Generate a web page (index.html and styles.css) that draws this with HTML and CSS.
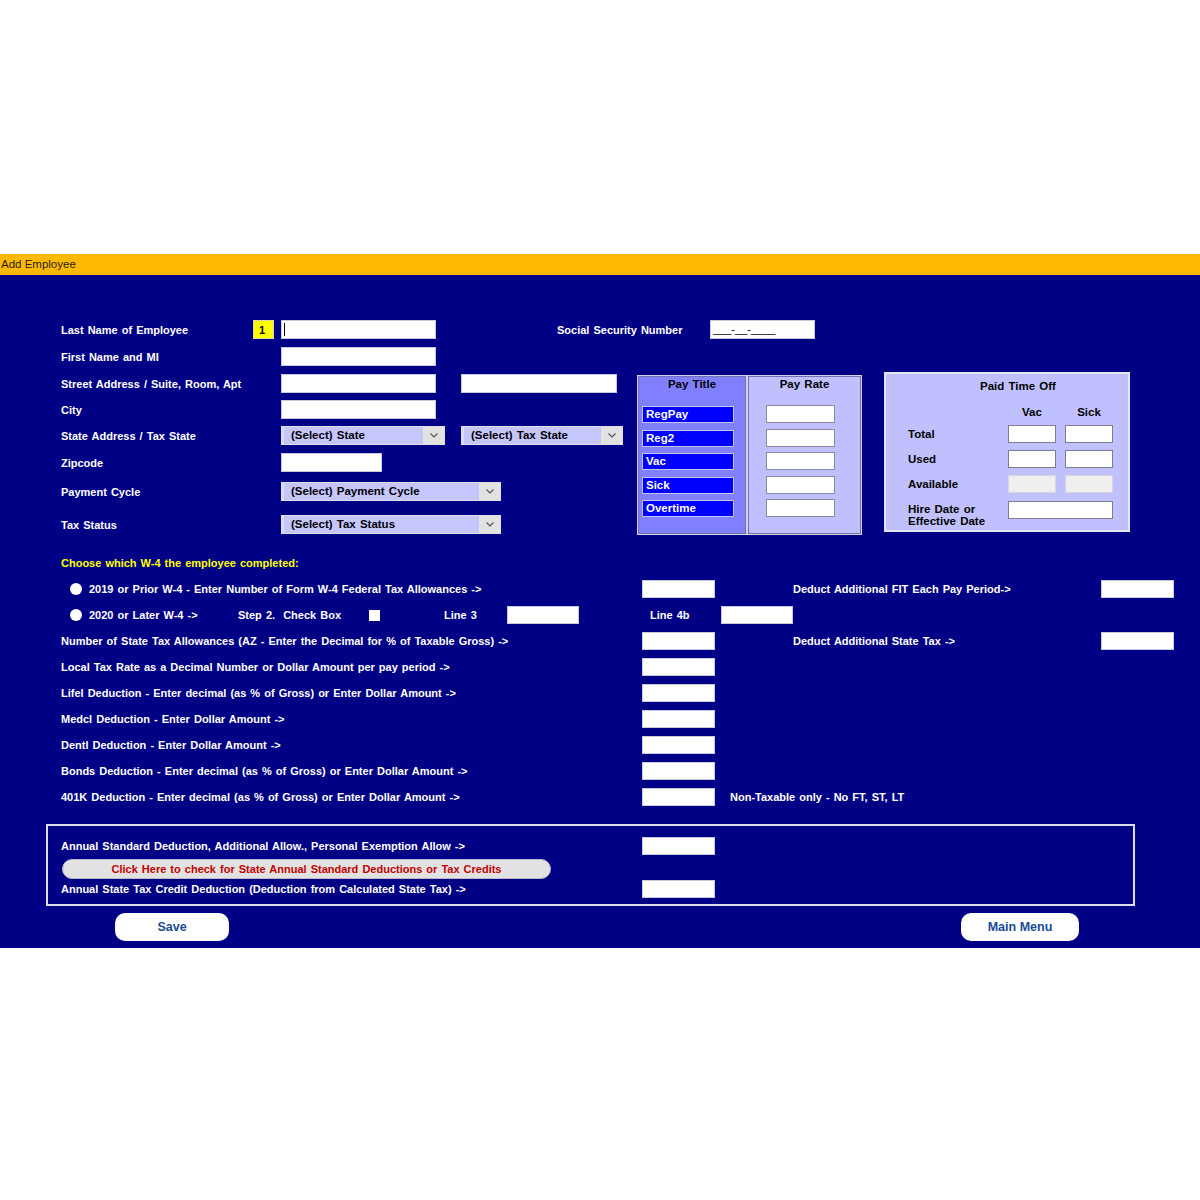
FILE: index.html
```html
<!DOCTYPE html>
<html>
<head>
<meta charset="utf-8">
<title>Add Employee</title>
<link rel="stylesheet" href="styles.css">
</head>
<body>
<div class="window">
  <div class="titlebar">Add Employee</div>
  <div class="form">
    <div class="row1">
      <div class="lbl w192">Last Name of Employee</div>
      <div class="idbox">1</div>
      <div class="inp w155"><span class="caret"></span></div>
      <div class="lbl ssn-lbl">Social Security Number</div>
      <div class="inp ssn">___-__-____</div>
    </div>

    <div class="top">
      <div class="left">
        <div class="r">
          <div class="lbl w220">First Name and MI</div>
          <div class="inp w155"></div>
        </div>
        <div class="r g8">
          <div class="lbl w220">Street Address / Suite, Room, Apt</div>
          <div class="inp w155"></div>
          <div class="inp w156 ml25"></div>
        </div>
        <div class="r g7">
          <div class="lbl w220">City</div>
          <div class="inp w155"></div>
        </div>
        <div class="r g7">
          <div class="lbl w220">State Address / Tax State</div>
          <div class="sel w164"><span class="seltxt">(Select) State</span><span class="arrow"><svg width="8" height="5" viewBox="0 0 8 5"><polyline points="0.5,0.5 4,4 7.5,0.5" fill="none" stroke="#505050" stroke-width="1.1"/></svg></span></div>
          <div class="sel w162 ml16"><span class="seltxt">(Select) Tax State</span><span class="arrow"><svg width="8" height="5" viewBox="0 0 8 5"><polyline points="0.5,0.5 4,4 7.5,0.5" fill="none" stroke="#505050" stroke-width="1.1"/></svg></span></div>
        </div>
        <div class="r g8">
          <div class="lbl w220">Zipcode</div>
          <div class="inp w101"></div>
        </div>
        <div class="r g10">
          <div class="lbl w220">Payment Cycle</div>
          <div class="sel w220s"><span class="seltxt">(Select) Payment Cycle</span><span class="arrow"><svg width="8" height="5" viewBox="0 0 8 5"><polyline points="0.5,0.5 4,4 7.5,0.5" fill="none" stroke="#505050" stroke-width="1.1"/></svg></span></div>
        </div>
        <div class="r g14">
          <div class="lbl w220">Tax Status</div>
          <div class="sel w220s"><span class="seltxt">(Select) Tax Status</span><span class="arrow"><svg width="8" height="5" viewBox="0 0 8 5"><polyline points="0.5,0.5 4,4 7.5,0.5" fill="none" stroke="#505050" stroke-width="1.1"/></svg></span></div>
        </div>
      </div>

      <div class="panels">
        <div class="pay">
          <div class="pay-title">
            <div class="phead">Pay Title</div>
            <div class="plist">
              <div class="ptitle">RegPay</div>
              <div class="ptitle">Reg2</div>
              <div class="ptitle">Vac</div>
              <div class="ptitle">Sick</div>
              <div class="ptitle">Overtime</div>
            </div>
          </div>
          <div class="pay-rate">
            <div class="phead">Pay Rate</div>
            <div class="rlist">
              <div class="prate"></div>
              <div class="prate"></div>
              <div class="prate"></div>
              <div class="prate"></div>
              <div class="prate"></div>
            </div>
          </div>
        </div>

        <div class="pto">
          <div class="pto-head">Paid Time Off</div>
          <div class="pto-row cols">
            <div class="pto-lbl"></div>
            <div class="pto-col">Vac</div>
            <div class="pto-col ml9">Sick</div>
          </div>
          <div class="pto-row m6">
            <div class="pto-lbl">Total</div>
            <div class="pto-inp"></div>
            <div class="pto-inp ml9"></div>
          </div>
          <div class="pto-row m7">
            <div class="pto-lbl">Used</div>
            <div class="pto-inp"></div>
            <div class="pto-inp ml9"></div>
          </div>
          <div class="pto-row m7">
            <div class="pto-lbl">Available</div>
            <div class="pto-inp dis"></div>
            <div class="pto-inp dis ml9"></div>
          </div>
          <div class="pto-row m8 hire">
            <div class="pto-lbl two">Hire Date or<br>Effective Date</div>
            <div class="pto-inp wide"></div>
          </div>
        </div>
      </div>
    </div>

    <div class="w4head">Choose which W-4 the employee completed:</div>

    <div class="list">
      <div class="lr">
        <div class="lcol radio-cell"><span class="radio"></span>2019 or Prior W-4 - Enter Number of Form W-4 Federal Tax Allowances -&gt;</div>
        <div class="inp w73"></div>
        <div class="rtxt">Deduct Additional FIT Each Pay Period-&gt;</div>
        <div class="inp w73"></div>
      </div>
      <div class="lr">
        <div class="cellA radio-cell"><span class="radio"></span>2020 or Later W-4 -&gt;</div>
        <div class="cellStep">Step 2.&nbsp; Check Box</div>
        <div class="chk"></div>
        <div class="cellLine3">Line 3</div>
        <div class="inp w72"></div>
        <div class="cellLine4">Line 4b</div>
        <div class="inp w72"></div>
      </div>
      <div class="lr">
        <div class="lcol">Number of State Tax Allowances (AZ - Enter the Decimal for % of Taxable Gross) -&gt;</div>
        <div class="inp w73"></div>
        <div class="rtxt">Deduct Additional State Tax -&gt;</div>
        <div class="inp w73"></div>
      </div>
      <div class="lr">
        <div class="lcol">Local Tax Rate as a Decimal Number or Dollar Amount per pay period -&gt;</div>
        <div class="inp w73"></div>
      </div>
      <div class="lr">
        <div class="lcol">Lifel Deduction - Enter decimal (as % of Gross) or Enter Dollar Amount -&gt;</div>
        <div class="inp w73"></div>
      </div>
      <div class="lr">
        <div class="lcol">Medcl Deduction - Enter Dollar Amount -&gt;</div>
        <div class="inp w73"></div>
      </div>
      <div class="lr g9">
        <div class="lcol">Dentl Deduction - Enter Dollar Amount -&gt;</div>
        <div class="inp w73"></div>
      </div>
      <div class="lr">
        <div class="lcol">Bonds Deduction - Enter decimal (as % of Gross) or Enter Dollar Amount -&gt;</div>
        <div class="inp w73"></div>
      </div>
      <div class="lr last">
        <div class="lcol">401K Deduction - Enter decimal (as % of Gross) or Enter Dollar Amount -&gt;</div>
        <div class="inp w73"></div>
        <div class="note">Non-Taxable only - No FT, ST, LT</div>
      </div>
    </div>

    <div class="annual">
      <div class="ar">
        <div class="acol">Annual Standard Deduction, Additional Allow., Personal Exemption Allow -&gt;</div>
        <div class="inp w73"></div>
      </div>
      <div class="pill">Click Here to check for State Annual Standard Deductions or Tax Credits</div>
      <div class="ar g1">
        <div class="acol">Annual State Tax Credit Deduction (Deduction from Calculated State Tax) -&gt;</div>
        <div class="inp w73"></div>
      </div>
    </div>

    <div class="buttons">
      <div class="btn save">Save</div>
      <div class="btn menu">Main Menu</div>
    </div>
  </div>
</div>
</body>
</html>
```
FILE: styles.css
```css
* { box-sizing: border-box; }

body {
  margin: 0;
  background: #ffffff;
  font-family: "Liberation Sans", Arial, sans-serif;
}

.window {
  margin-top: 254px;
}

.titlebar {
  height: 21px;
  background: #ffb900;
  color: #1e1e1e;
  font-size: 11.5px;
  line-height: 21px;
  padding-left: 1px;
}

.form {
  background: #010186;
  height: 673px;
  padding-top: 45px;
  color: #ffffff;
  font-size: 11px;
  font-weight: bold;
  word-spacing: 1px;
}

.lbl { white-space: nowrap; }
.w192 { width: 192px; }
.w220 { width: 220px; }

.inp {
  height: 19px;
  background: #ffffff;
  border: 1px solid #c9c9dc;
  color: #000;
}
.w155 { width: 155px; }
.w156 { width: 156px; }
.w101 { width: 101px; }
.w73 { width: 73px; height: 18px; }
.w72 { width: 72px; height: 18px; }
.ml25 { margin-left: 25px; }
.ml16 { margin-left: 16px; }
.ml9 { margin-left: 9px; }

.row1 {
  display: flex;
  align-items: center;
  height: 19px;
  padding-left: 61px;
}

.idbox {
  width: 21px;
  height: 19px;
  background: #ffff00;
  color: #000;
  padding-left: 5px;
  line-height: 19px;
  margin-right: 7px;
  border: 1px solid #d8d8a0;
}

.caret {
  display: block;
  width: 1px;
  height: 13px;
  background: #000;
  margin: 2px 0 0 2px;
}

.ssn-lbl {
  margin-left: 121px;
  width: 153px;
}

.ssn {
  width: 105px;
  padding-left: 2px;
  font-weight: normal;
  line-height: 17px;
  font-size: 11px;
  word-spacing: 0;
}

.top {
  display: flex;
  padding-left: 61px;
  margin-top: 8px;
}

.left {
  width: 576px;
}

.r {
  display: flex;
  align-items: center;
  height: 19px;
}
.g7 { margin-top: 7px; }
.g8 { margin-top: 8px; }
.g10 { margin-top: 10px; }
.g14 { margin-top: 14px; }

.sel {
  display: flex;
  height: 19px;
  background: #c6c6ff;
  border: 1px solid #dedede;
  border-left: 3px solid #dcdce8;
  color: #000;
}
.w164 { width: 164px; }
.w162 { width: 162px; }
.w220s { width: 220px; }

.seltxt {
  flex: 1;
  padding-left: 7px;
  line-height: 17px;
  font-size: 11.5px;
  white-space: nowrap;
}

.arrow {
  width: 21px;
  background: #e2e2e2;
  display: flex;
  align-items: center;
  justify-content: center;
}

.panels {
  display: flex;
  align-items: flex-start;
  margin-top: 25px;
}

.pay {
  display: flex;
  margin-top: 3px;
  height: 160px;
}

.pay-title,
.pay-rate {
  height: 160px;
  border: 1px solid #d4d4e4;
  box-shadow: inset 0 0 0 1px #7070b8;
  color: #000;
}

.pay-title {
  width: 110px;
  background: #8080ff;
}

.pay-rate {
  width: 115px;
  background: #c0c0ff;
}

.phead {
  text-align: center;
  font-size: 11.5px;
  line-height: 13px;
  padding-top: 2px;
}

.plist {
  display: flex;
  flex-direction: column;
  gap: 6.5px;
  margin-top: 15px;
  padding-left: 4px;
}

.ptitle {
  width: 92px;
  height: 17px;
  background: #0000ff;
  border: 1px solid #c4c4e4;
  color: #fff;
  font-size: 11.5px;
  line-height: 15px;
  padding-left: 3px;
}

.rlist {
  display: flex;
  flex-direction: column;
  gap: 5.5px;
  margin-top: 14px;
  padding-left: 18px;
}

.prate {
  width: 69px;
  height: 18px;
  background: #fff;
  border: 1px solid #8a8a9a;
}

.pto {
  margin-left: 22px;
  width: 246px;
  height: 160px;
  background: #c0c0ff;
  border: 2px solid #e6e6f4;
  color: #000;
  padding-left: 22px;
  font-size: 11.5px;
}

.pto-head {
  text-align: center;
  line-height: 13px;
  padding-top: 6px;
}

.pto-row {
  display: flex;
  align-items: center;
  height: 18px;
}

.pto-row.cols {
  height: 14px;
  margin-top: 12px;
}

.m6 { margin-top: 6px; }
.m7 { margin-top: 7px; }
.m8 { margin-top: 8px; }

.pto-lbl {
  width: 100px;
  white-space: nowrap;
}

.pto-col {
  width: 48px;
  text-align: center;
}

.pto-inp {
  width: 48px;
  height: 18px;
  background: #fff;
  border: 1px solid #7c7c90;
}

.pto-inp.dis {
  background: #eeeeee;
  border-color: #d6d6e0;
}

.pto-inp.wide {
  width: 105px;
}

.pto-row.hire {
  align-items: flex-start;
}

.pto-lbl.two {
  line-height: 12px;
  margin-top: 2px;
}

.w4head {
  color: #ffff00;
  padding-left: 61px;
  line-height: 14px;
  margin-top: 21px;
}

.list {
  margin-top: 10px;
}

.lr {
  display: flex;
  align-items: center;
  height: 18px;
  padding-left: 61px;
  margin-bottom: 8px;
  white-space: nowrap;
}
.lr.g9 { margin-top: 1px; }
.lr.last { margin-bottom: 0; }

.lcol { width: 581px; }

.radio-cell {
  display: flex;
  align-items: center;
}

.radio {
  width: 12px;
  height: 12px;
  border-radius: 50%;
  background: #fff;
  margin-left: 9px;
  margin-right: 7px;
  flex: none;
}

.rtxt {
  margin-left: 78px;
  width: 308px;
}

.cellA { width: 177px; }
.cellStep { width: 131px; }
.chk {
  width: 11px;
  height: 11px;
  background: #fff;
  margin-right: 64px;
}
.cellLine3 { width: 63px; }
.cellLine4 { width: 71px; margin-left: 71px; }

.note {
  margin-left: 15px;
}

.annual {
  margin-top: 18px;
  margin-left: 46px;
  width: 1089px;
  height: 82px;
  border: 2px solid #dcdcf0;
  padding-top: 11px;
  padding-left: 13px;
}

.ar {
  display: flex;
  align-items: center;
  height: 18px;
  white-space: nowrap;
}
.ar.g1 { margin-top: 1px; }

.acol { width: 581px; }

.pill {
  margin-top: 4px;
  margin-left: 1px;
  width: 489px;
  height: 20px;
  border-radius: 10px;
  background: #e2e2e2;
  border: 1px solid #b8b8c8;
  color: #c40000;
  text-align: center;
  line-height: 18px;
}

.buttons {
  display: flex;
  margin-top: 7px;
}

.btn {
  height: 28px;
  background: #ffffff;
  border-radius: 10px;
  color: #1a4b96;
  font-size: 12.5px;
  text-align: center;
  line-height: 28px;
  word-spacing: 0;
}

.save {
  margin-left: 115px;
  width: 114px;
}

.menu {
  margin-left: 732px;
  width: 118px;
}
```
